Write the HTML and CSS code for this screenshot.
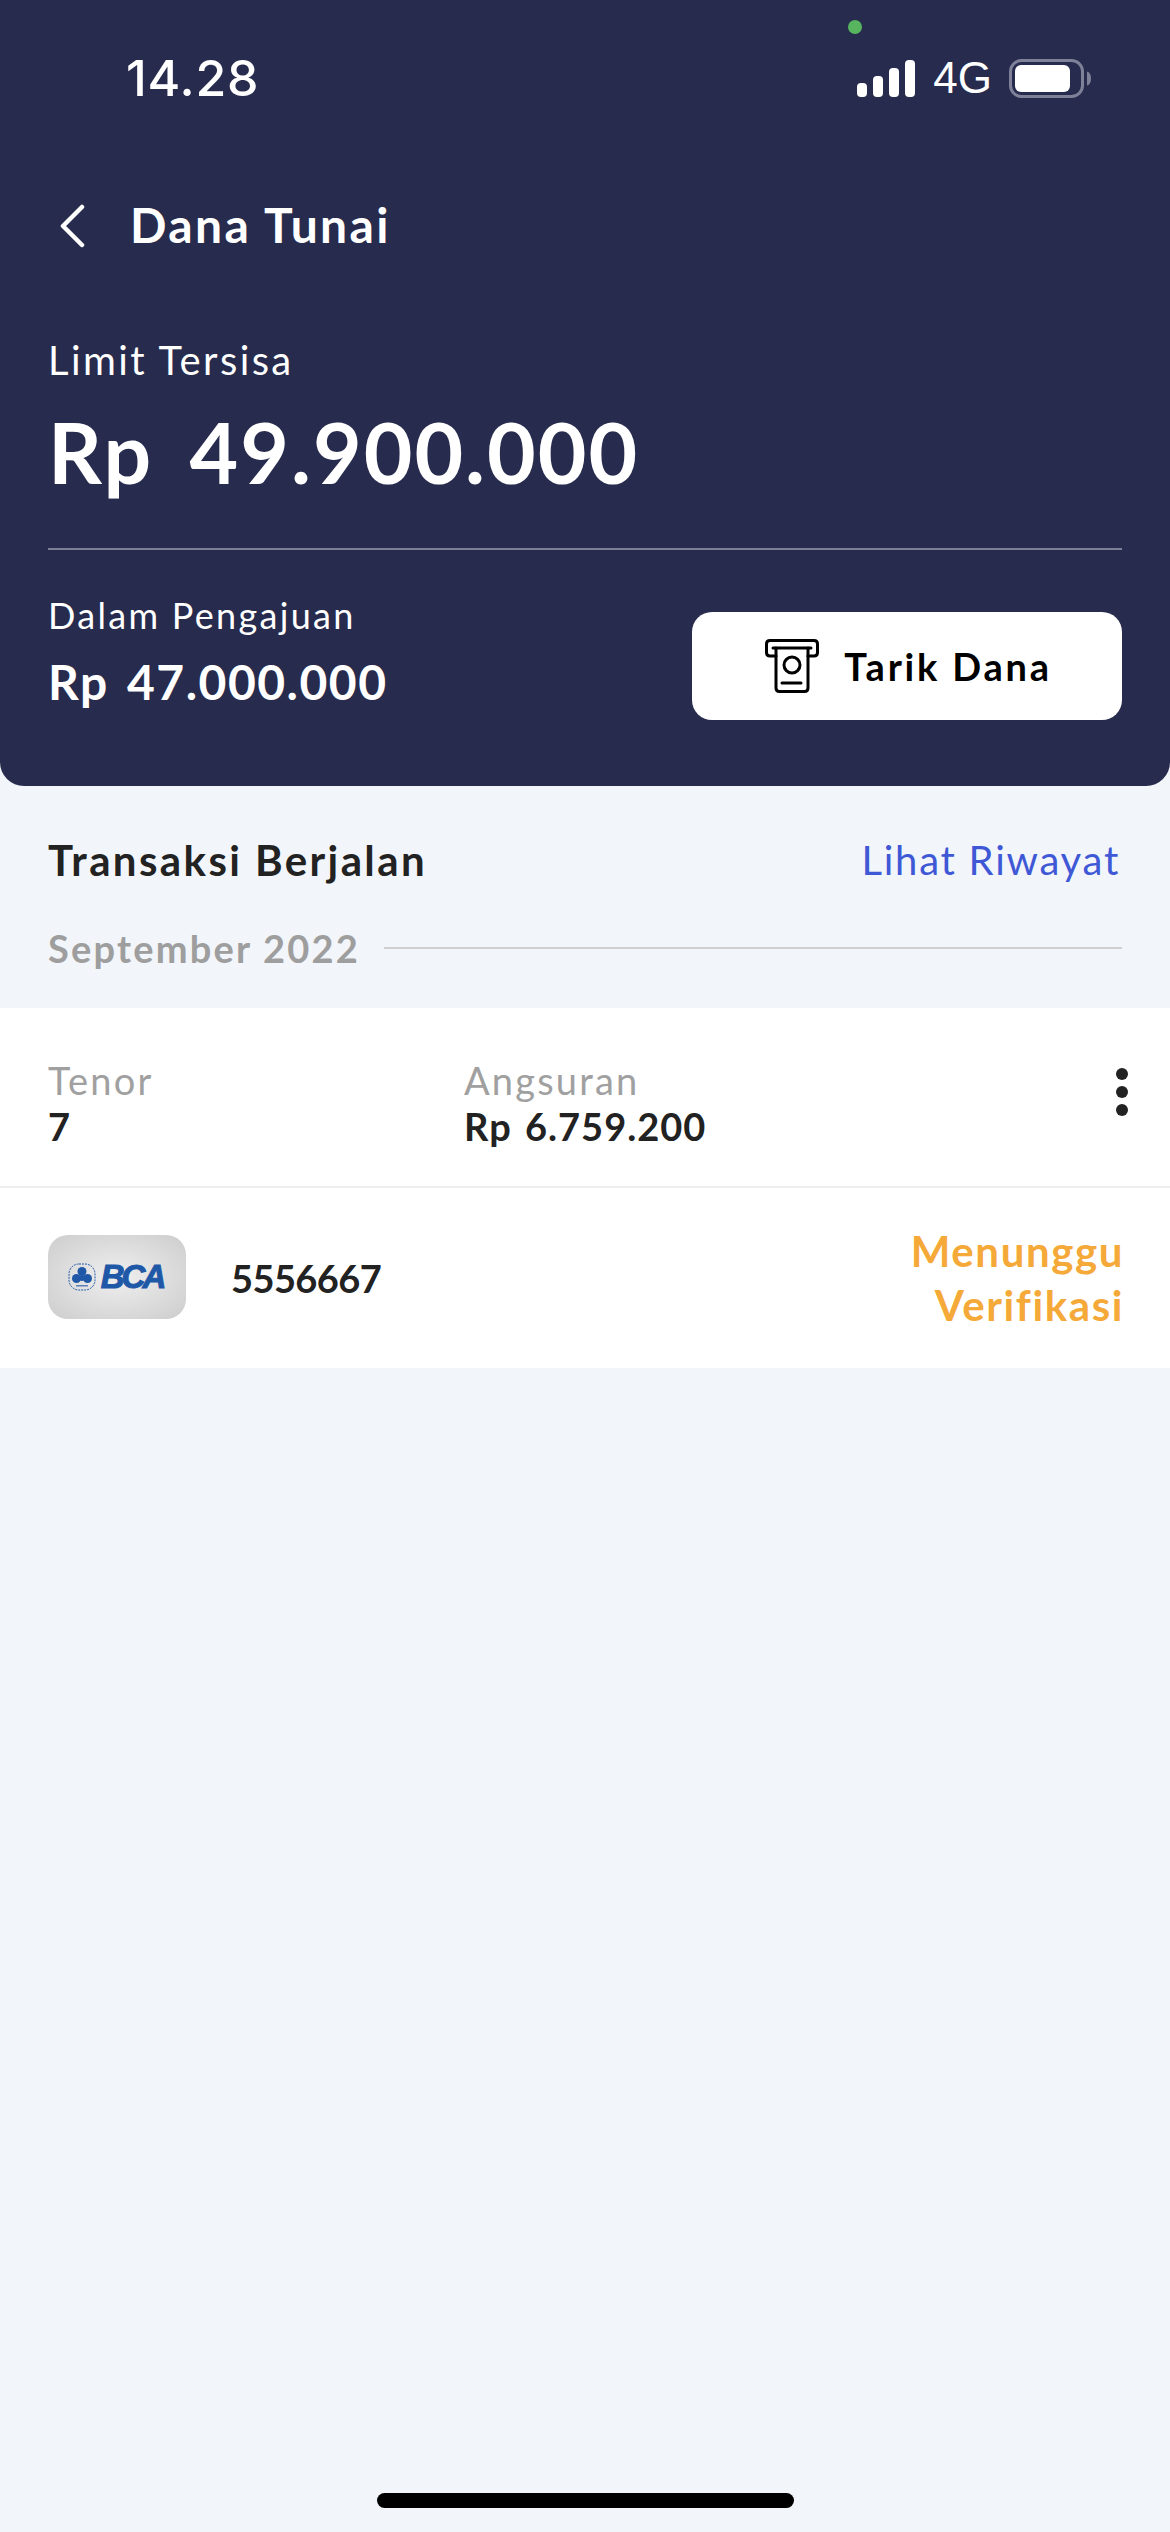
FILE: index.html
```html
<!DOCTYPE html>
<html lang="en">
<head>
  <meta charset="UTF-8">
  <title>Dana Tunai</title>
  <link rel="stylesheet" href="styles.css">
</head>
<body>
  <header class="top">
    <span class="camera-dot"></span>
    <div class="status-bar">
      <span class="clock">14.28</span>
      <div class="status-icons">
        <svg class="signal" width="58" height="37" viewBox="0 0 58 37">
          <rect x="0" y="23" width="10" height="14" rx="4"/>
          <rect x="16" y="16" width="10" height="21" rx="4"/>
          <rect x="32" y="8" width="10" height="29" rx="4"/>
          <rect x="48" y="0" width="10" height="37" rx="4"/>
        </svg>
        <span class="network">4G</span>
        <svg class="battery" width="82" height="39" viewBox="0 0 82 39">
          <rect x="1.5" y="1.5" width="72" height="36" rx="11" fill="none" stroke="#7f8199" stroke-width="3"/>
          <rect x="6" y="6" width="55" height="27" rx="6" fill="#fff"/>
          <path d="M78 12.500c2.500.5 4 3 4 7s-1.500 6.500-4 7z" fill="#7f8199"/>
        </svg>
      </div>
    </div>

    <div class="title-row">
      <svg class="back" width="26" height="44" viewBox="0 0 26 44">
        <path d="M23 3 L4 22 L23 41" fill="none" stroke="#fff" stroke-width="4.500" stroke-linecap="round" stroke-linejoin="round"/>
      </svg>
      <h1>Dana Tunai</h1>
    </div>

    <div class="limit">
      <div class="limit-label">Limit Tersisa</div>
      <div class="limit-amount">Rp 49.900.000</div>
    </div>

    <div class="pending">
      <div>
        <div class="pending-label">Dalam Pengajuan</div>
        <div class="pending-amount">Rp 47.000.000</div>
      </div>
      <button class="withdraw">
        <svg width="54" height="54" viewBox="0 0 54 54" fill="none" stroke="#000" stroke-width="3" stroke-linecap="round" stroke-linejoin="round">
          <path d="M11 17H5Q1.500 17 1.500 13.500V5Q1.500 1.500 5 1.500H49Q52.500 1.500 52.500 5V13.500Q52.500 17 49 17H43"/>
          <path d="M8 9H46"/>
          <path d="M11 9V49Q11 52.500 14.500 52.500H39.500Q43 52.500 43 49V9"/>
          <circle cx="27" cy="26" r="8"/>
          <path d="M17 44H36"/>
        </svg>
        <span>Tarik Dana</span>
      </button>
    </div>
  </header>

  <section class="section-head">
    <h2>Transaksi Berjalan</h2>
    <a class="history-link">Lihat Riwayat</a>
  </section>

  <div class="month">
    <span>September 2022</span>
    <div class="month-line"></div>
  </div>

  <div class="card">
    <div class="card-summary">
      <div class="col-tenor">
        <div class="summary-label">Tenor</div>
        <div class="summary-value">7</div>
      </div>
      <div class="col-installment">
        <div class="summary-label">Angsuran</div>
        <div class="summary-value">Rp 6.759.200</div>
      </div>
      <div class="more">
        <span></span><span></span><span></span>
      </div>
    </div>
    <div class="card-detail">
      <div class="bank-logo">
        <svg width="28" height="28" viewBox="0 0 28 28">
          <rect x="1" y="1" width="26" height="26" rx="10" fill="none" stroke="#2058a8" stroke-width="1" stroke-dasharray="2 1"/>
          <g fill="#2058a8">
            <circle cx="14" cy="8.500" r="4.500"/>
            <circle cx="8.500" cy="15.500" r="4.500"/>
            <circle cx="19.500" cy="15.500" r="4.500"/>
            <circle cx="14" cy="15" r="3"/>
            <rect x="8" y="22" width="12" height="1.500" opacity="0.700"/>
          </g>
        </svg>
        <span class="bank-name">BCA</span>
      </div>
      <div class="account">5556667</div>
      <div class="state">Menunggu<br>Verifikasi</div>
    </div>
  </div>

  <div class="home-bar"></div>
</body>
</html>
```

FILE: styles.css
```css
* {
  box-sizing: border-box;
}

body {
  position: relative;
  margin: 0;
  height: 2532px;
  overflow: hidden;
  font-family: "Lato", "Noto Sans", sans-serif;
  background-color: #f2f5fa;
  color: #222;
}

h1, h2 {
  margin: 0;
}

.top {
  position: relative;
  height: 786px;
  background-color: #272b4d;
  color: white;
  border-radius: 0 0 24px 24px;
}

.camera-dot {
  position: absolute;
  left: 848px;
  top: 20px;
  width: 14px;
  height: 14px;
  border-radius: 50%;
  background-color: #57b45f;
}

.status-bar {
  display: flex;
  justify-content: space-between;
  align-items: center;
  height: 156px;
  padding: 0 79px 0 126px;
}

.clock {
  font-family: "Inter", sans-serif;
  font-size: 50px;
  font-weight: 500;
  letter-spacing: 0.800px;
}

.status-icons {
  display: flex;
  align-items: center;
}

.signal {
  fill: white;
}

.network {
  margin: 0 17px 0 18px;
  font-family: "Liberation Sans", sans-serif;
  font-size: 44px;
}

.title-row {
  display: flex;
  align-items: center;
  gap: 45px;
  height: 140px;
  padding-left: 59px;
}

h1 {
  margin-bottom: 3px;
  font-size: 48px;
  font-weight: 700;
  letter-spacing: 2.400px;
}

.limit {
  padding: 39px 48px 0;
}

.limit-label {
  height: 50px;
  font-size: 40px;
  line-height: 50px;
  letter-spacing: 2.400px;
}

.limit-amount {
  margin-top: 37px;
  padding-bottom: 66px;
  border-bottom: 2px solid #7c7f97;
  font-size: 84px;
  font-weight: 700;
  line-height: 60px;
  letter-spacing: 2px;
  word-spacing: 14px;
}

.pending {
  display: flex;
  justify-content: space-between;
  align-items: flex-start;
  margin: 0 48px;
  padding-top: 62px;
}

.pending-label {
  margin-top: -20px;
  font-size: 36px;
  line-height: 46px;
  letter-spacing: 2.300px;
}

.pending-amount {
  margin-top: 15px;
  font-size: 48px;
  font-weight: 700;
  line-height: 58px;
  letter-spacing: 1.500px;
  word-spacing: 5px;
}

.withdraw {
  display: flex;
  justify-content: center;
  align-items: center;
  gap: 25px;
  width: 430px;
  height: 108px;
  padding: 0 0 0 3px;
  border: none;
  border-radius: 20px;
  background-color: white;
  color: black;
  font-family: inherit;
  font-size: 38px;
  font-weight: 700;
  letter-spacing: 2.800px;
}

.section-head {
  display: flex;
  justify-content: space-between;
  align-items: center;
  height: 96px;
  margin-top: 26px;
  padding: 0 50px 0 48px;
}

h2 {
  font-size: 42px;
  font-weight: 700;
  letter-spacing: 2.400px;
}

.history-link {
  color: #3f58d6;
  font-size: 40px;
  letter-spacing: 1.750px;
}

.month {
  display: flex;
  align-items: center;
  gap: 24px;
  height: 52px;
  margin: 14px 48px 0;
  color: #9e9e9e;
  font-size: 38px;
  font-weight: 700;
  letter-spacing: 2.200px;
}

.month-line {
  flex: 1;
  height: 2px;
  background-color: #cfcfcf;
}

.card {
  margin-top: 34px;
  background-color: white;
}

.card-summary {
  display: flex;
  height: 180px;
  padding: 49px 48px 0;
  border-bottom: 2px solid #eeeeee;
}

.col-tenor {
  width: 416px;
}

.col-installment {
  flex: 1;
}

.summary-label {
  color: #a0a0a0;
  font-size: 38px;
  line-height: 46px;
  letter-spacing: 2.200px;
}

.summary-value {
  font-size: 38px;
  font-weight: 700;
  line-height: 47px;
  letter-spacing: 1px;
  word-spacing: 3px;
}

.more {
  display: flex;
  flex-direction: column;
  gap: 6px;
  margin: 11px -6px 0 0;
}

.more span {
  width: 12px;
  height: 12px;
  border-radius: 50%;
  background-color: #222;
}

.card-detail {
  display: flex;
  align-items: center;
  height: 180px;
  padding: 0 46px 0 48px;
}

.bank-logo {
  display: flex;
  justify-content: center;
  align-items: center;
  gap: 5px;
  width: 138px;
  height: 84px;
  margin-top: -2px;
  border-radius: 20px;
  background: radial-gradient(ellipse at center, #ececec 10%, #d0d0d0 90%);
}

.bank-name {
  padding-right: 3px;
  color: #2058a8;
  font-family: "Liberation Sans", sans-serif;
  font-size: 33px;
  font-weight: 700;
  font-style: italic;
  letter-spacing: -3px;
  -webkit-text-stroke: 1px #2058a8;
}

.account {
  flex: 1;
  margin-left: 45px;
  font-size: 38px;
  font-weight: 700;
  letter-spacing: -0.600px;
}

.state {
  color: #f5a938;
  font-size: 42px;
  font-weight: 700;
  line-height: 54px;
  text-align: right;
  letter-spacing: 1.600px;
}

.home-bar {
  position: absolute;
  left: 377px;
  top: 2493px;
  width: 417px;
  height: 15px;
  border-radius: 8px;
  background-color: black;
}
```
